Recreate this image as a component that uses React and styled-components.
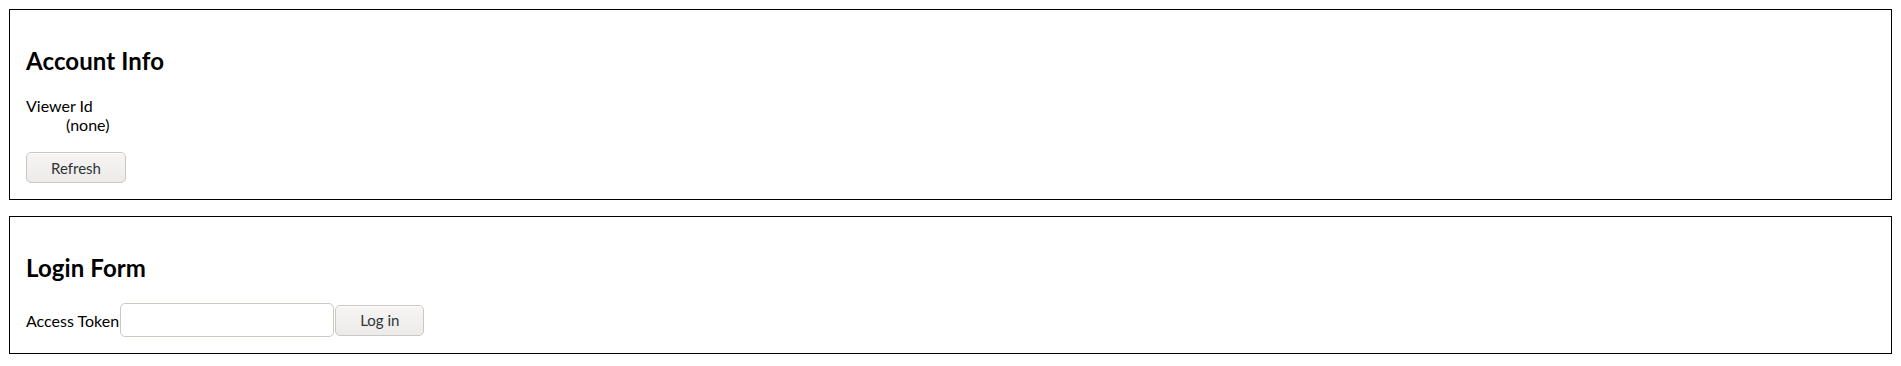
import React from 'react';
import styled, { createGlobalStyle } from 'styled-components';

const GlobalStyle = createGlobalStyle`
  body {
    margin: 0;
    background: #fff;
    color: #000;
    font-family: Lato, 'Open Sans', sans-serif;
    font-size: 16px;
  }
`;

const Page = styled.div`
  margin: 9px;
  display: flex;
  flex-direction: column;
  gap: 16px;
`;

const Panel = styled.section`
  border: 1px solid #000;
  padding: 16px;
`;

const Heading = styled.h2`
  margin: 20px 0 21px;
  font-size: 24px;
  line-height: 29px;
  font-weight: 700;
  letter-spacing: 0.1px;
`;

const InfoList = styled.dl`
  margin: 0 0 18px;
  line-height: 19px;
`;

const Term = styled.dt`
  margin: 0;
`;

const Value = styled.dd`
  margin: 0 0 0 40px;
`;

const Button = styled.button`
  height: 31px;
  padding: 0 24px;
  font-family: Lato, 'Open Sans', sans-serif;
  font-size: 15px;
  color: #2e3436;
  background: linear-gradient(to bottom, #f6f5f4, #edebe9);
  border: 1px solid #cdc7c2;
  border-radius: 5px;
  box-shadow: inset 0 1px #fff;
  cursor: pointer;
`;

const FormRow = styled.form`
  display: flex;
  align-items: center;
  gap: 1px;
  margin: 0;
`;

const Label = styled.label`
  line-height: 19px;
`;

const TokenInput = styled.input`
  box-sizing: border-box;
  width: 214px;
  height: 34px;
  margin: 0;
  padding: 0 8px;
  font-family: Lato, 'Open Sans', sans-serif;
  font-size: 15px;
  background: #fff;
  border: 1px solid #cdc7c2;
  border-radius: 5px;
  outline: none;
`;

const AccountInfo = () => (
  <Panel>
    <Heading>Account Info</Heading>
    <InfoList>
      <Term>Viewer Id</Term>
      <Value>(none)</Value>
    </InfoList>
    <Button type='button'>Refresh</Button>
  </Panel>
);

const LoginForm = () => (
  <Panel>
    <Heading>Login Form</Heading>
    <FormRow onSubmit={(e) => e.preventDefault()}>
      <Label htmlFor='token'>Access Token</Label>
      <TokenInput id='token' type='text' />
      <Button type='submit'>Log in</Button>
    </FormRow>
  </Panel>
);

const App = () => (
  <>
    <GlobalStyle />
    <Page>
      <AccountInfo />
      <LoginForm />
    </Page>
  </>
);

export default App;
